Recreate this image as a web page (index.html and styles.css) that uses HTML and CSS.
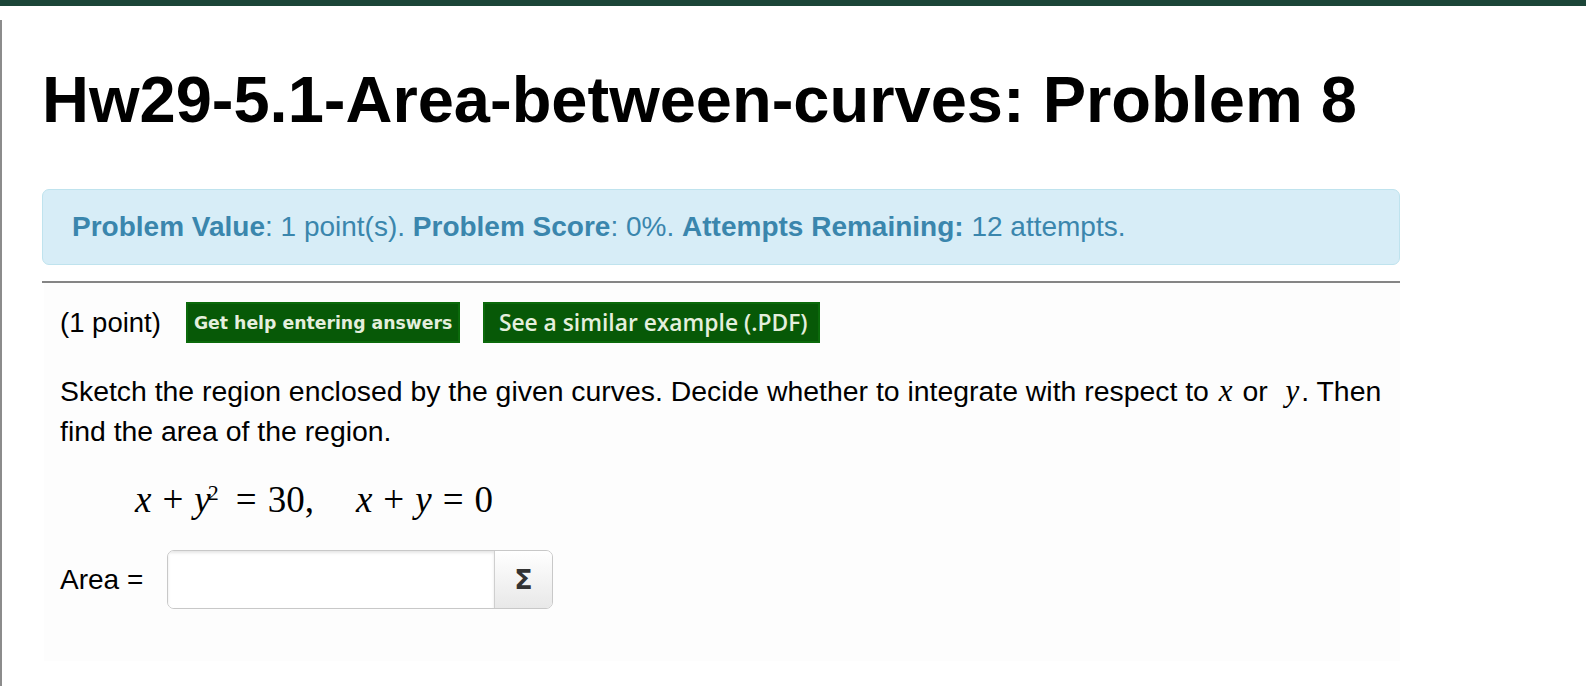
FILE: index.html
```html
<!DOCTYPE html>
<html>
<head>
<meta charset="utf-8">
<link rel="stylesheet" href="styles.css">
</head>
<body>
<div class="topbar"></div>
<div class="page">
  <div class="content">
    <h1 class="title">Hw29-5.1-Area-between-curves: Problem 8</h1>
    <div class="alert">
      <b>Problem Value</b>: 1 point(s). <b>Problem Score</b>: 0%. <b>Attempts Remaining:</b> 12 attempts.
    </div>
    <div class="rule"></div>
    <div class="problem">
      <div class="points-row">
        <span class="points">(1 point)</span>
        <span class="btn btn-help">Get help entering answers</span>
        <span class="gap-dot"></span>
        <span class="btn btn-example">See a similar example (.PDF)</span>
      </div>
      <p class="prompt">Sketch the region enclosed by the given curves. Decide whether to integrate with respect to <i class="mv">x</i> or &nbsp;<i class="mv">y</i>. Then find the area of the region.</p>
      <div class="math"><i>x</i><span class="op">+</span><i>y</i><sup>2</sup><span class="op eq">=</span>30,<span class="sep"></span><i>x</i><span class="op">+</span><i>y</i><span class="op">=</span>0</div>
      <div class="answer-row">
        <span class="label">Area =</span>
        <div class="input-group">
          <div class="input"></div>
          <div class="sigma">&Sigma;</div>
        </div>
      </div>
    </div>
  </div>
</div>
</body>
</html>
```

FILE: styles.css
```css
html, body {
  margin: 0;
  padding: 0;
  background: #ffffff;
}
body {
  font-family: "Liberation Sans", Arial, Helvetica, sans-serif;
  color: #000;
}
.topbar {
  height: 6px;
  background: #1b4538;
}
.page {
  border-left: 2px solid #8c8c8c;
  margin-top: 14px;
  min-height: 666px;
  padding-left: 40px;
  box-sizing: border-box;
}
.content {
  width: 1358px;
}
.title {
  margin: 0;
  padding-top: 43px;
  font-size: 65px;
  line-height: 74px;
  font-weight: bold;
}
.alert {
  margin-top: 52px;
  height: 76px;
  box-sizing: border-box;
  background: #d7edf7;
  border: 1px solid #bfe3ee;
  border-radius: 7px;
  color: #3a86ad;
  font-size: 28px;
  line-height: 74px;
  padding-left: 29px;
}
.alert b {
  font-weight: bold;
}
.rule {
  margin-top: 16px;
  height: 2px;
  background: #858585;
}
.problem {
  margin-left: 2px;
  background: #fdfdfd;
  height: 378px;
  padding-left: 16px;
  box-sizing: border-box;
}
.points-row {
  display: flex;
  align-items: center;
  padding-top: 19px;
  height: 41px;
}
.points {
  font-size: 27.5px;
  margin-right: 25px;
}
.btn {
  display: flex;
  align-items: center;
  height: 41px;
  box-sizing: border-box;
  background: #075907;
  border: 2px solid #0b6a0b;
  color: #e4efdd;
  white-space: nowrap;
  overflow: hidden;
}
.btn-help {
  width: 274px;
  padding-left: 6px;
  font-family: "DejaVu Sans", sans-serif;
  font-weight: bold;
  font-size: 17.3px;
}
.gap-dot {
  width: 23px;
}
.btn-example {
  width: 337px;
  padding-left: 14px;
  font-family: "Open Sans", sans-serif;
  font-weight: 600;
  font-size: 22.8px;
}
.prompt {
  margin: 28px 0 0 0;
  font-size: 28.4px;
  line-height: 40px;
  width: 1330px;
}
.mv {
  font-family: "Liberation Serif", "Times New Roman", serif;
  font-size: 31px;
  margin: 0 2px;
}
.math {
  margin-top: 24px;
  margin-left: 75px;
  font-family: "Liberation Serif", "Times New Roman", serif;
  font-size: 37px;
  line-height: 50px;
  display: flex;
  align-items: baseline;
}
.math sup {
  font-size: 22px;
  position: relative;
  top: -12px;
  margin-left: -3px;
  line-height: 1;
}
.op {
  margin: 0 11px;
}
.op.eq {
  margin-left: 17px;
}
.sep {
  width: 42px;
}
.answer-row {
  display: flex;
  align-items: center;
  margin-top: 25px;
}
.label {
  font-size: 28px;
  width: 107px;
}
.input-group {
  display: flex;
  height: 59px;
  width: 386px;
  box-sizing: border-box;
  border: 1px solid #c8c8c8;
  border-radius: 7px;
  overflow: hidden;
}
.input {
  flex: 1;
  background: #fff;
  box-shadow: inset 0 2px 3px rgba(0,0,0,0.1);
}
.sigma {
  width: 57px;
  border-left: 1px solid #cfcfcf;
  background: linear-gradient(#ffffff, #e8e8e8);
  display: flex;
  align-items: center;
  justify-content: center;
  font-family: "DejaVu Sans", sans-serif;
  font-weight: bold;
  font-size: 27px;
  color: #333;
}
```
